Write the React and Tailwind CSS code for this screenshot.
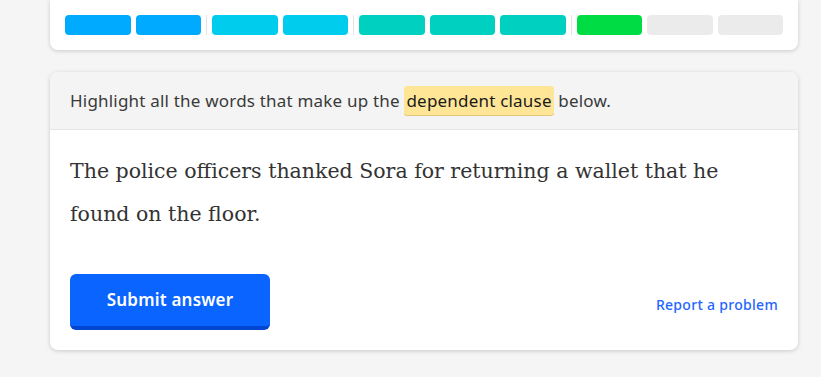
import React from 'react';

const segments = [
  { color: 'bg-[#00aaff]', count: 2 },
  { color: 'bg-[#00ccee]', count: 2 },
  { color: 'bg-[#00d0c0]', count: 3 },
  { color: 'bg-[#00dd44]', count: 1 },
  { color: 'bg-[#ebebeb]', count: 2 },
];

function ProgressBar() {
  return (
    <div className="flex items-stretch gap-[5px] h-5">
      {segments.map((group, gi) => (
        <React.Fragment key={gi}>
          {Array.from({ length: group.count }).map((_, i) => (
            <div key={i} className={`flex-1 rounded-[4px] ${group.color}`} />
          ))}
          {gi < 3 && <div className="w-px bg-[#e4e4e4]" />}
        </React.Fragment>
      ))}
    </div>
  );
}

export default function App() {
  return (
    <div className="min-h-screen w-full bg-[#f5f5f5] font-['Noto_Sans',sans-serif] overflow-hidden">
      <div className="ml-[50px] w-[748px] bg-white rounded-b-lg shadow-[0_1px_4px_rgba(0,0,0,0.18)] px-[15px] pt-[15px] pb-[15px]">
        <ProgressBar />
      </div>

      <div className="ml-[50px] mt-[22px] w-[748px] bg-white rounded-lg shadow-[0_1px_4px_rgba(0,0,0,0.18)] overflow-hidden">
        <div className="h-[58px] flex items-center px-5 bg-[#f4f4f4] border-b border-[#e6e6e6] text-[17px] tracking-[0.2px] text-[#3a3a3a]">
          <span>
            Highlight all the words that make up the{' '}
            <span className="inline-block bg-[#ffe697] rounded-[3px] px-[2px] leading-[29px] text-[#1a1a1a] shadow-[0_1px_0_#e3c679]">
              dependent clause
            </span>{' '}
            below.
          </span>
        </div>

        <div className="px-5 pt-5 pb-5">
          <p className="font-['DejaVu_Serif',Georgia,serif] text-[20.5px] leading-[43px] text-[#333333]">
            The police officers thanked Sora for returning a wallet that he found on the floor.
          </p>

          <div className="mt-[38px] flex items-center justify-between">
            <button className="w-[200px] h-[56px] rounded-[6px] bg-[#0a64ff] border-b-4 border-[#0046d0] text-white text-[17px] font-semibold tracking-[0.2px]">
              Submit answer
            </button>
            <a href="#" className="text-[14px] font-medium tracking-[0.3px] text-[#1f66ff] mt-[4px]">
              Report a problem
            </a>
          </div>
        </div>
      </div>
    </div>
  );
}
